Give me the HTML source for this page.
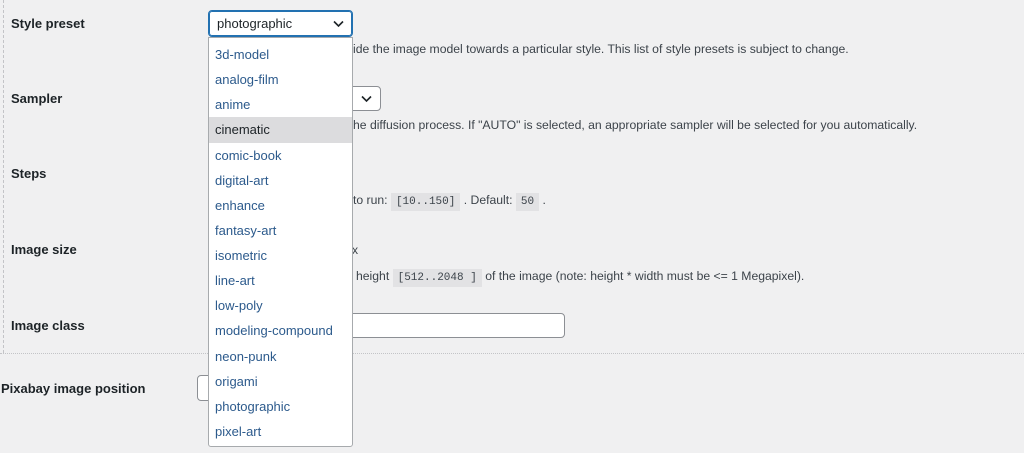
<!DOCTYPE html>
<html><head><style>
body{margin:0;width:1024px;height:453px;background:#f0f0f1;font-family:"Liberation Sans",sans-serif;font-size:13px;color:#3c434a;position:relative;overflow:hidden}
.a{position:absolute;white-space:nowrap}
.d{font-size:12.2px}
.l{font-weight:bold;color:#1d2327;font-size:13px}
code{font-family:"Liberation Mono",monospace;font-size:11px;background:#e2e2e4;padding:3px 5px;color:#3c434a}
.sel{position:absolute;background:#fff;border:1px solid #8c8f94;border-radius:4px;box-sizing:border-box}
.list{position:absolute;left:208px;top:37px;width:145px;height:410px;background:#fff;border:1px solid #a7aaad;border-radius:0 0 3px 3px;box-sizing:border-box;padding-top:4px}
.list div{height:25.13px;line-height:25px;padding-left:6px;color:#2c5a8c}
.list .h{background:#dcdcde;color:#1d2327}
</style></head><body>
<div class="a" style="left:3px;top:0;height:353px;border-left:1px dashed #c3c4c7"></div>
<div class="a" style="left:0;top:353px;width:1024px;border-top:1px dotted #c3c4c7"></div>
<div class="a l" style="left:11px;top:16px">Style preset</div>
<div class="a l" style="left:11px;top:91px">Sampler</div>
<div class="a l" style="left:11px;top:166px">Steps</div>
<div class="a l" style="left:11px;top:242px">Image size</div>
<div class="a l" style="left:11px;top:318px">Image class</div>
<div class="a l" style="left:1px;top:381px">Pixabay image position</div>
<div class="a d" style="left:353px;top:42px">ide the image model towards a particular style. This list of style presets is subject to change.</div>
<div class="a d" style="left:353px;top:118px">he diffusion process. If "AUTO" is selected, an appropriate sampler will be selected for you automatically.</div>
<div class="a d" style="left:353px;top:193px">to run: <code>[10..150]</code> . Default: <code>50</code> .</div>
<div class="a d" style="left:352px;top:243px">x</div>
<div class="a d" style="left:356px;top:269px">height <code>[512..2048 ]</code> of the image (note: height * width must be &lt;= 1 Megapixel).</div>
<div class="sel" style="left:300px;top:86px;width:81px;height:25px"><svg style="position:absolute;right:8px;top:8px" width="11" height="8"><path d="M1 1.5l4.5 4.5 4.5-4.5" stroke="#1d2327" stroke-width="1.6" fill="none"/></svg></div>
<div class="sel" style="left:300px;top:313px;width:265px;height:25px"></div>
<div class="sel" style="left:197px;top:375px;width:60px;height:26px"></div>
<div class="sel" style="left:208px;top:10px;width:145px;height:27px;border-color:#2271b1;box-shadow:0 0 0 1px #2271b1 inset;"><span class="a" style="left:8px;top:5px;color:#1d2327;font-size:13px">photographic</span><svg style="position:absolute;right:8px;top:9px" width="11" height="8"><path d="M1 1.5l4.5 4.5 4.5-4.5" stroke="#1d2327" stroke-width="1.6" fill="none"/></svg></div>
<div class="list">
<div>3d-model</div><div>analog-film</div><div>anime</div><div class="h">cinematic</div><div>comic-book</div><div>digital-art</div><div>enhance</div><div>fantasy-art</div><div>isometric</div><div>line-art</div><div>low-poly</div><div>modeling-compound</div><div>neon-punk</div><div>origami</div><div>photographic</div><div>pixel-art</div>
</div>
</body></html>
